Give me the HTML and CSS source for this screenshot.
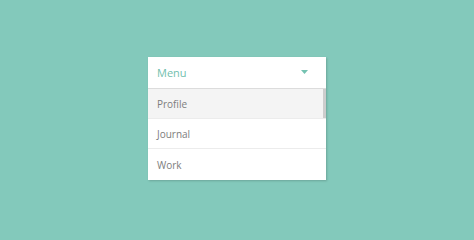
FILE: index.html
```html
<!DOCTYPE html>
<html>
<head>
<meta charset="utf-8">
<link rel="stylesheet" href="styles.css">
</head>
<body>
<div class="stage">
  <div class="dropdown">
    <div class="dropdown-header">
      <span class="dropdown-title">Menu</span>
      <svg class="caret" width="7" height="4" viewBox="0 0 7 4"><path d="M0 0H7L3.5 4Z" fill="#74c2b1"/></svg>
    </div>
    <div class="dropdown-list">
      <div class="item item-active">Profile</div>
      <div class="item">Journal</div>
      <div class="item item-last">Work</div>
      <div class="scroll-thumb"></div>
    </div>
  </div>
</div>
</body>
</html>
```
FILE: styles.css
```css
html, body {
  margin: 0;
  padding: 0;
}
body {
  background: #83c9bb;
  font-family: "Open Sans", "Noto Sans", sans-serif;
}
.stage {
  width: 474px;
  height: 237px;
  display: flex;
  align-items: center;
  justify-content: center;
}
.dropdown {
  width: 178px;
  height: 123px;
  background: #fff;
  box-shadow: 1px 1px 2px rgba(0, 0, 0, 0.18);
  display: flex;
  flex-direction: column;
}
.dropdown-header {
  height: 32px;
  box-sizing: border-box;
  border-bottom: 1px solid #dcdcdc;
  display: flex;
  align-items: center;
  justify-content: space-between;
  padding: 0 18px 0 9px;
}
.dropdown-title {
  color: #72c0ae;
  font-size: 11px;
}
.caret {
  display: block;
  margin-top: -1px;
}
.dropdown-list {
  position: relative;
  flex: 1;
  display: flex;
  flex-direction: column;
}
.item {
  height: 30px;
  flex-shrink: 0;
  box-sizing: border-box;
  border-bottom: 1px solid #ececec;
  display: flex;
  align-items: center;
  padding-left: 9px;
  font-size: 10px;
  color: #7d7d7d;
}
.item-active {
  background: #f4f4f4;
}
.item-last {
  border-bottom: none;
  flex: 1;
}
.scroll-thumb {
  position: absolute;
  right: 0;
  top: 0;
  width: 3px;
  height: 29px;
  background: #cdcdcd;
}
```
